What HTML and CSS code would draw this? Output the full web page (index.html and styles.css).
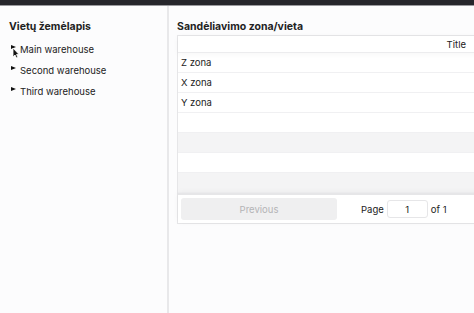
FILE: index.html
```html
<!DOCTYPE html>
<html lang="lt">
<head>
  <meta charset="UTF-8" />
  <title>Sandėliai</title>
  <link rel="stylesheet" href="styles.css">
</head>
<body>

  <!-- Top bar -->
  <div class="topbar"></div>

  <div class="layout">

    <!-- Sidebar tree -->
    <div class="sidebar">
      <h3>Vietų žemėlapis</h3>
      <ul class="tree">
        <li><span class="caret"></span>Main warehouse</li>
        <li><span class="caret"></span>Second warehouse</li>
        <li><span class="caret"></span>Third warehouse</li>
      </ul>
      <svg class="cursor" width="8" height="12" viewBox="0 0 8 12">
        <path d="M1 1 L1 10 L3 8 L4.5 11 L6 10.3 L4.5 7.5 L7 7.5 Z" fill="#111" stroke="#fff" stroke-width="0.8"/>
      </svg>
    </div>

    <!-- Content -->
    <div class="content">
      <h3>Sandėliavimo zona/vieta</h3>
      <div class="table">
        <div class="thead">
          <div class="th">Title</div>
        </div>
        <div class="tbody">
          <div class="tr">Z zona</div>
          <div class="tr">X zona</div>
          <div class="tr">Y zona</div>
          <div class="tr pad"></div>
          <div class="tr pad odd"></div>
          <div class="tr pad"></div>
          <div class="tr pad odd"></div>
        </div>
        <div class="pagination">
          <button class="prev" disabled>Previous</button>
          <div class="page-info">
            Page <input type="text" value="1"> of 1
          </div>
        </div>
      </div>
    </div>

  </div>

</body>
</html>
```

FILE: styles.css
```css
body {
  margin: 0;
  font-family: Inter, "Liberation Sans", Arial, sans-serif;
  font-size: 9.5px;
  color: #222;
  background-color: #fcfcfd;
  height: 313px;
  overflow: hidden;
}

.topbar {
  height: 5px;
  background-color: #26262b;
  border-bottom: 1px solid #9a9a9e;
}

.layout {
  display: flex;
  height: 307px;
}

/* SIDEBAR */
.sidebar {
  position: relative;
  width: 158px;
  padding: 14px 0 0 9px;
  border-right: 2px solid #e8e8ea;
}

h3 {
  margin: 0;
  font-size: 10.5px;
  font-weight: bold;
  line-height: 14px;
}

.tree {
  list-style: none;
  margin: 7px 0 0 0;
  padding: 0;
}

.tree li {
  position: relative;
  padding-left: 11px;
  height: 21px;
  line-height: 17px;
}

.caret {
  position: absolute;
  left: 2px;
  top: 4px;
  width: 0;
  height: 0;
  border-top: 2.5px solid transparent;
  border-bottom: 2.5px solid transparent;
  border-left: 5px solid #111;
}

.cursor {
  position: absolute;
  left: 12px;
  top: 41px;
}

/* CONTENT */
.content {
  flex: 1;
  padding: 14px 0 0 8px;
  overflow: hidden;
}

.content h3 {
  margin-bottom: 1px;
}

.table {
  width: 460px;
  border: 1px solid #e6e6e8;
  background-color: #fff;
}

.thead {
  display: flex;
  justify-content: flex-end;
  height: 16px;
  border-bottom: 1px solid #ececee;
  box-shadow: 0 1px 6px rgba(0,0,0,0.04);
}

.th {
  width: 160px;
  padding-right: 10px;
  text-align: right;
  line-height: 18px;
  box-sizing: border-box;
  margin-right: 162px;
}

.tr {
  height: 19px;
  line-height: 19px;
  padding-left: 3px;
  border-bottom: 1px solid #f0f0f2;
}

.tr.odd {
  background-color: #f4f4f5;
}

.pagination {
  display: flex;
  align-items: center;
  padding: 3px;
  border-top: 2px solid #e6e6e8;
  box-shadow: 0 -1px 6px rgba(0,0,0,0.04);
}

.prev {
  width: 156px;
  height: 22px;
  border: none;
  border-radius: 3px;
  background-color: #efeff0;
  color: #b4b4b6;
  font-family: inherit;
  font-size: 9.5px;
}

.page-info {
  padding-left: 24px;
  display: flex;
  align-items: center;
  gap: 3px;
}

.page-info input {
  width: 41px;
  height: 18px;
  box-sizing: border-box;
  border: 1px solid #e6e6e8;
  border-radius: 3px;
  text-align: center;
  font-family: inherit;
  font-size: 9.5px;
  color: #222;
  padding: 0;
}
```
